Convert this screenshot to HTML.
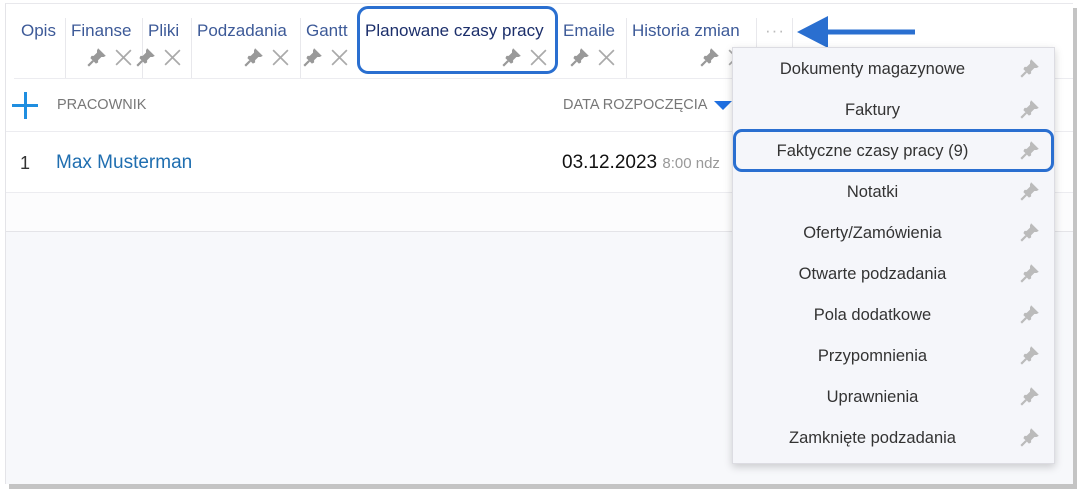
<!DOCTYPE html>
<html><head><meta charset="utf-8"><style>
*{margin:0;padding:0;box-sizing:border-box}
body{width:1081px;height:494px;background:#fff;font-family:"Liberation Sans",sans-serif;position:relative;overflow:hidden}
.card{position:absolute;left:5px;top:3px;width:1068px;height:481px;background:#f7f8fb;border-left:1px solid #e4e4e8;border-top:1px solid #e8e8ec;box-shadow:4px 5px 0 #c4c4c4}
.a{position:absolute;white-space:nowrap}
.tab{font-size:17px;color:#3d5a98;top:21px}
.sep{position:absolute;top:18px;width:1px;height:60px;background:#e8e8ec}
.pin{position:absolute;width:22px;height:22px}
.x{position:absolute;width:19px;height:19px}
.mi{position:absolute;left:732px;width:281px;text-align:center;font-size:16.5px;color:#333}
</style></head><body>
<svg width="0" height="0" style="position:absolute"><defs>
<symbol id="p" viewBox="0 0 20 20"><path d="M11 2 L18 9 L16 10 L14 10 L11 13 L11 15 L9 16 L4 11 L5 9 L7 9 L10 6 L10 4 Z" fill="currentColor"/><path d="M6.5 13.5 L2 18" stroke="currentColor" stroke-width="2"/></symbol>
<symbol id="x" viewBox="0 0 18 18"><path d="M2 2 L16 16 M16 2 L2 16" stroke="#aaa" stroke-width="1.6"/></symbol>
</defs></svg>
<div class="card"></div>
<div class="a" style="left:6px;top:4px;width:1067px;height:228px;background:#fff"></div>
<div class="a" style="left:6px;top:192px;width:1067px;height:40px;background:#fcfcfd;border-top:1px solid #ececf0;border-bottom:1px solid #e4e4e8"></div>
<div class="a" style="left:14px;top:78px;width:1059px;height:1px;background:#ececf0"></div>
<div class="a" style="left:6px;top:131px;width:1067px;height:1px;background:#ececf0"></div>
<div class="sep" style="left:65px"></div><div class="sep" style="left:142px"></div><div class="sep" style="left:191px"></div><div class="sep" style="left:300px"></div><div class="sep" style="left:626px"></div><div class="sep" style="left:756px"></div><div class="sep" style="left:792px"></div>
<div class="a tab" style="left:21px">Opis</div>
<div class="a tab" style="left:71px">Finanse</div>
<div class="a tab" style="left:148px">Pliki</div>
<div class="a tab" style="left:197px">Podzadania</div>
<div class="a tab" style="left:306px">Gantt</div>
<div class="a tab" style="left:365px;color:#1c2f6b">Planowane czasy pracy</div>
<div class="a tab" style="left:563px">Emaile</div>
<div class="a tab" style="left:632px">Historia zmian</div>
<div class="a" style="left:765px;top:21px;font-size:17px;color:#bbb;letter-spacing:1px">···</div>
<svg class="pin" style="left:86px;top:46px;color:#999"><use href="#p"/></svg><svg class="x" style="left:114px;top:48px"><use href="#x"/></svg>
<svg class="pin" style="left:135px;top:46px;color:#999"><use href="#p"/></svg><svg class="x" style="left:163px;top:48px"><use href="#x"/></svg>
<svg class="pin" style="left:243px;top:46px;color:#999"><use href="#p"/></svg><svg class="x" style="left:271px;top:48px"><use href="#x"/></svg>
<svg class="pin" style="left:302px;top:46px;color:#999"><use href="#p"/></svg><svg class="x" style="left:330px;top:48px"><use href="#x"/></svg>
<svg class="pin" style="left:501px;top:46px;color:#999"><use href="#p"/></svg><svg class="x" style="left:529px;top:48px"><use href="#x"/></svg>
<svg class="pin" style="left:569px;top:46px;color:#999"><use href="#p"/></svg><svg class="x" style="left:597px;top:48px"><use href="#x"/></svg>
<svg class="pin" style="left:699px;top:46px;color:#999"><use href="#p"/></svg><svg class="x" style="left:727px;top:48px"><use href="#x"/></svg>
<div class="a" style="left:357px;top:6px;width:201px;height:68px;border:3px solid #2a6fd0;border-radius:11px"></div>
<div class="a" style="left:12px;top:104px;width:26px;height:3px;background:#1f8ee0"></div>
<div class="a" style="left:24px;top:92px;width:3px;height:27px;background:#1f8ee0"></div>
<div class="a" style="left:57px;top:97px;font-size:14.5px;color:#777">PRACOWNIK</div>
<div class="a" style="left:563px;top:97px;font-size:14.5px;color:#777">DATA ROZPOCZĘCIA</div>
<div class="a" style="left:714px;top:101px;width:0;height:0;border-left:9px solid transparent;border-right:9px solid transparent;border-top:9px solid #1f6fe0"></div>
<div class="a" style="left:20px;top:153px;font-size:18px;color:#333">1</div>
<div class="a" style="left:56px;top:152px;font-size:19px;color:#1f6eb0">Max Musterman</div>
<div class="a" style="left:562px;top:152px;font-size:19px;color:#111">03.12.2023 <span style="font-size:15px;color:#999">8:00 ndz</span></div>
<svg class="a" style="left:795px;top:14px" width="125" height="36"><path d="M30 18 H120" stroke="#2a6fd0" stroke-width="5"/><path d="M2 18 L33 2 L33 34 Z" fill="#2a6fd0"/></svg>
<div class="a" style="left:732px;top:47px;width:323px;height:417px;background:#f5f6fa;border:1px solid #dcdce2;box-shadow:0 3px 8px rgba(0,0,0,.18)"></div>
<div class="mi" style="top:60px">Dokumenty magazynowe</div>
<div class="mi" style="top:101px">Faktury</div>
<div class="mi" style="top:142px">Faktyczne czasy pracy (9)</div>
<div class="mi" style="top:183px">Notatki</div>
<div class="mi" style="top:224px">Oferty/Zamówienia</div>
<div class="mi" style="top:265px">Otwarte podzadania</div>
<div class="mi" style="top:306px">Pola dodatkowe</div>
<div class="mi" style="top:347px">Przypomnienia</div>
<div class="mi" style="top:388px">Uprawnienia</div>
<div class="mi" style="top:429px">Zamknięte podzadania</div>
<svg class="pin" style="left:1019px;top:57px;color:#bbb"><use href="#p"/></svg>
<svg class="pin" style="left:1019px;top:98px;color:#bbb"><use href="#p"/></svg>
<svg class="pin" style="left:1019px;top:139px;color:#bbb"><use href="#p"/></svg>
<svg class="pin" style="left:1019px;top:180px;color:#bbb"><use href="#p"/></svg>
<svg class="pin" style="left:1019px;top:221px;color:#bbb"><use href="#p"/></svg>
<svg class="pin" style="left:1019px;top:262px;color:#bbb"><use href="#p"/></svg>
<svg class="pin" style="left:1019px;top:303px;color:#bbb"><use href="#p"/></svg>
<svg class="pin" style="left:1019px;top:344px;color:#bbb"><use href="#p"/></svg>
<svg class="pin" style="left:1019px;top:385px;color:#bbb"><use href="#p"/></svg>
<svg class="pin" style="left:1019px;top:426px;color:#bbb"><use href="#p"/></svg>
<div class="a" style="left:733px;top:129px;width:321px;height:43px;border:3px solid #2a6fd0;border-radius:9px"></div>
</body></html>
